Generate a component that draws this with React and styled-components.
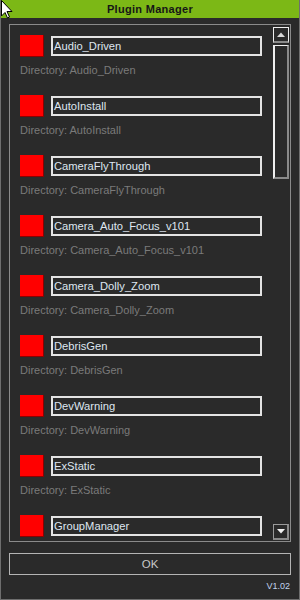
import React from 'react'
import styled, { createGlobalStyle } from 'styled-components'

const plugins = [
  'Audio_Driven',
  'AutoInstall',
  'CameraFlyThrough',
  'Camera_Auto_Focus_v101',
  'Camera_Dolly_Zoom',
  'DebrisGen',
  'DevWarning',
  'ExStatic',
  'GroupManager',
]

const Global = createGlobalStyle`
  html, body { margin: 0; padding: 0; background: #2a2a2a; }
  body { font-family: "Liberation Sans", Arial, sans-serif; }
`

const Window = styled.div`
  position: relative;
  width: 300px;
  height: 600px;
  box-sizing: border-box;
  background: #2a2a2a;
  border: 1px solid #6e6e6e;
  border-top: none;
  display: flex;
  flex-direction: column;
  overflow: hidden;
`

const TitleBar = styled.div`
  height: 18px;
  margin: 0 -1px;
  background: #7cb816;
  color: #161616;
  font-weight: bold;
  font-size: 11px;
  line-height: 18px;
  text-align: center;
  letter-spacing: 0.3px;
`

const Body = styled.div`
  flex: 1;
  display: flex;
  flex-direction: column;
  padding: 6px 8px 0 8px;
`

const ListFrame = styled.div`
  height: 518px;
  box-sizing: border-box;
  border: 1px solid #8a8a8a;
  display: flex;
`

const List = styled.div`
  flex: 1;
  overflow: hidden;
  padding: 10px 0 0 10px;
`

const Item = styled.div`
  height: 60px;
`

const Row = styled.div`
  display: flex;
  align-items: center;
  height: 22px;
  gap: 7px;
`

const Toggle = styled.div`
  width: 24px;
  height: 22px;
  box-sizing: border-box;
  background: #ff0000;
  border-right: 1px solid #8c0000;
  border-bottom: 1px solid #8c0000;
`

const NameBox = styled.div`
  width: 211px;
  height: 20px;
  box-sizing: border-box;
  border: 2px solid #e4e4e4;
  color: #dfe6f0;
  font-size: 11.2px;
  line-height: 16px;
  padding-left: 1px;
  white-space: nowrap;
  overflow: hidden;
`

const Dir = styled.div`
  margin-top: 6px;
  height: 14px;
  line-height: 14px;
  font-size: 11px;
  color: #7a7a7a;
  white-space: nowrap;
`

const ScrollBar = styled.div`
  width: 16px;
  margin: 2px 1px 1px 0;
  display: flex;
  flex-direction: column;
  gap: 2px;
`

const ArrowButton = styled.div`
  height: 16px;
  box-sizing: border-box;
  border-top: 1px solid ${p => (p.$down ? '#9a9a9a' : '#eeeeee')};
  border-left: 1px solid ${p => (p.$down ? '#9a9a9a' : '#eeeeee')};
  border-right: ${p => (p.$down ? '2px solid #8a8a8a' : '1px solid #eeeeee')};
  border-bottom: 2px solid #8a8a8a;
  display: flex;
  align-items: center;
  justify-content: center;
`

const Thumb = styled.div`
  height: 134px;
  box-sizing: border-box;
  border-top: 1px solid #eeeeee;
  border-left: 2px solid #eeeeee;
  border-right: 2px solid #8a8a8a;
  border-bottom: 2px solid #8a8a8a;
`

const Track = styled.div`
  flex: 1;
`

const OkButton = styled.div`
  margin-top: 11px;
  height: 22px;
  box-sizing: border-box;
  border: 1px solid #b4b4b4;
  color: #c8c8c8;
  font-size: 11.5px;
  line-height: 20px;
  text-align: center;
`

const Version = styled.div`
  margin-top: 6px;
  text-align: right;
  padding-right: 1px;
  font-size: 9px;
  color: #c0d2ec;
`

const Cursor = styled.svg`
  position: absolute;
  left: 0;
  top: 0;
`

function Triangle({ down }) {
  return (
    <svg width="8" height="5" viewBox="0 0 8 5">
      <path d={down ? 'M0 0 H8 L4 4.5 Z' : 'M4 0.5 L8 5 H0 Z'} fill={down ? '#f0f0f0' : '#d8d8d8'} />
    </svg>
  )
}

export default function App() {
  return (
    <Window>
      <Global />
      <TitleBar>Plugin Manager</TitleBar>
      <Body>
        <ListFrame>
          <List>
            {plugins.map(name => (
              <Item key={name}>
                <Row>
                  <Toggle />
                  <NameBox>{name}</NameBox>
                </Row>
                <Dir>Directory: {name}</Dir>
              </Item>
            ))}
          </List>
          <ScrollBar>
            <ArrowButton>
              <Triangle />
            </ArrowButton>
            <Thumb />
            <Track />
            <ArrowButton $down>
              <Triangle down />
            </ArrowButton>
          </ScrollBar>
        </ListFrame>
        <OkButton>OK</OkButton>
        <Version>V1.02</Version>
      </Body>
      <Cursor width="13" height="19" viewBox="0 0 13 19">
        <path d="M0.5 0.5 L0.5 16 L4 12.5 L6.5 18 L8.5 17 L6 11.5 L11 11.5 Z" fill="#ffffff" stroke="#000000" strokeWidth="1" />
      </Cursor>
    </Window>
  )
}
